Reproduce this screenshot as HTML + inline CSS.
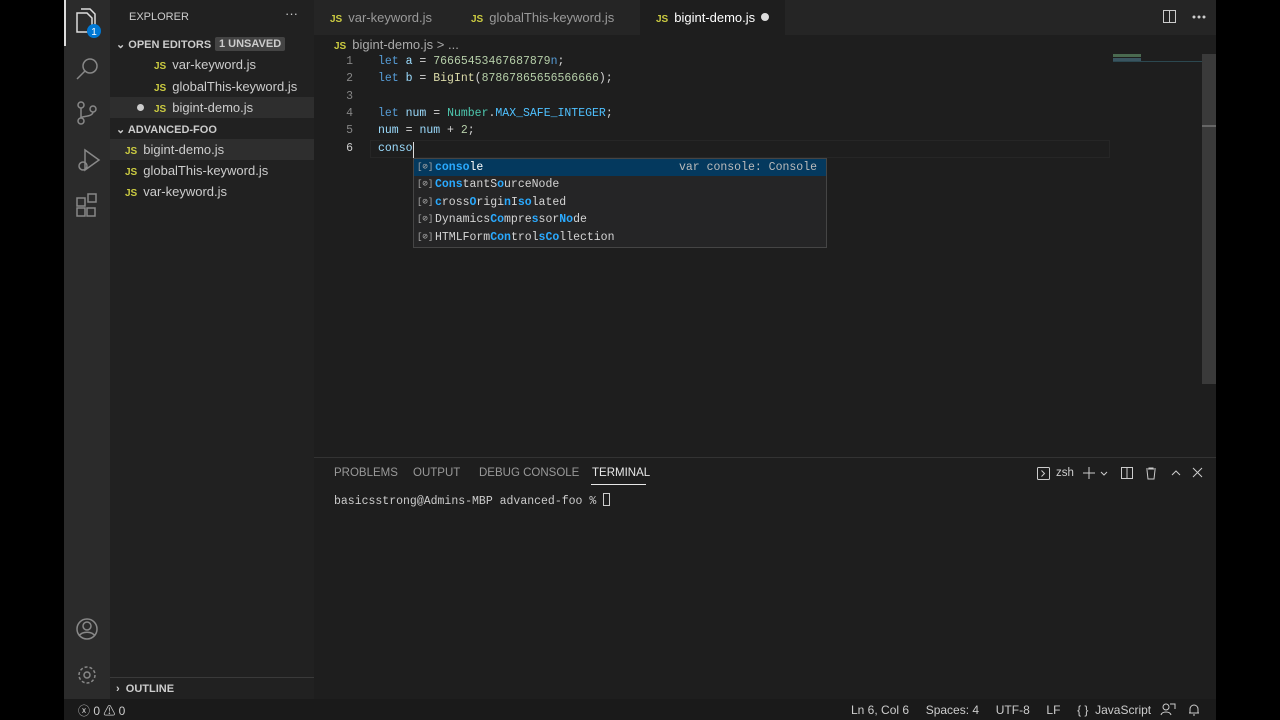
<!DOCTYPE html>
<html><head><meta charset="utf-8"><style>
*{box-sizing:border-box;margin:0;padding:0}
body{width:1280px;height:720px;background:#000;position:relative;overflow:hidden;font-family:"Liberation Sans",sans-serif;font-size:13px;color:#ccc}
.abs{position:absolute}
.act{left:64px;top:0;width:46px;height:699px;background:#2b2b2b}
.side{left:110px;top:0;width:204px;height:699px;background:#212121}
.ed{left:314px;top:0;width:902px;height:457px;background:#1e1e1e}
.tabs{left:314px;top:0;width:902px;height:35px;background:#252525}
.tab{position:absolute;top:0;height:35px;line-height:35px;font-size:13px;color:#9a9a9a;padding-left:16px}
.js{color:#cbcb41;font-weight:bold;font-size:10px;margin-right:6px}
.mono{font-family:"Liberation Mono",monospace;font-size:11.5px}
.ln{position:absolute;left:330px;width:23px;text-align:right;color:#858585}
.code{position:absolute;left:378px;color:#d4d4d4;white-space:pre}
.kw{color:#569cd6}.num{color:#b5cea8}.var{color:#9cdcfe}.cls{color:#4ec9b0}.fn{color:#dcdcaa}.const{color:#4fc1ff}
.sug{left:413px;top:158px;width:414px;height:90px;background:#252526;border:1px solid #454545}
.row{position:absolute;left:0;width:412px;height:17.4px;line-height:17.4px;padding-left:21px;color:#d4d4d4}
.row b{color:#2aaaff;font-weight:bold}
.ic{position:absolute;left:3px;top:0;color:#aaa;font-size:9px}
.panel{left:314px;top:457px;width:902px;height:242px;background:#1e1e1e;border-top:1px solid #333}
.status{left:64px;top:699px;width:1152px;height:21px;background:#1a1a1a;font-size:12px;color:#ccc}
.hdr{font-size:11px;font-weight:bold;color:#ccc}
.file{position:absolute;font-size:13px;color:#ccc;height:21px;line-height:21px}
</style></head><body>
<div class="abs act"></div>
<div class="abs" style="left:64px;top:0;width:2px;height:46px;background:#ddd"></div>
<svg class="abs" style="left:64px;top:0" width="46" height="699" fill="none" stroke="#888" stroke-width="1.5">
<g stroke="#ddd"><path d="M13 13h10l5 5v14H13z"/><path d="M17 9h9l5 5v14"/></g>
<circle cx="30" cy="31" r="7" fill="#0078d4" stroke="none"/><text x="30" y="35" fill="#fff" stroke="none" font-size="10" text-anchor="middle" font-family="Liberation Sans">1</text>
<circle cx="26" cy="66" r="7"/><path d="M21 71l-8 8"/>
<circle cx="17" cy="105" r="3"/><circle cx="17" cy="121" r="3"/><circle cx="29" cy="109" r="3"/><path d="M17 108v10M29 112c0 5-12 4-12 6"/>
<path d="M21 150v20l14-10z"/><circle cx="19" cy="166" r="4"/>
<rect x="13" y="198" width="8" height="8"/><rect x="13" y="208" width="8" height="8"/><rect x="23" y="208" width="8" height="8"/><rect x="24" y="194" width="8" height="8"/>
<circle cx="23" cy="629" r="10"/><circle cx="23" cy="626" r="4"/><path d="M15 636c3-5 13-5 16 0"/>
<circle cx="23" cy="675" r="3"/><circle cx="23" cy="675" r="8" stroke-dasharray="3 2"/>
</svg>
<div class="abs side"></div>
<div class="abs hdr" style="left:129px;top:11px;font-weight:normal">EXPLORER</div>
<div class="abs" style="left:285px;top:6px;color:#ccc">···</div>
<div class="abs hdr" style="left:116px;top:38px">⌄ OPEN EDITORS</div>
<div class="abs hdr" style="left:215px;top:37px;background:#444;padding:1px 4px;border-radius:2px">1 UNSAVED</div>
<div class="file" style="left:154px;top:54px"><span class="js">JS</span>var-keyword.js</div>
<div class="file" style="left:154px;top:76px"><span class="js">JS</span>globalThis-keyword.js</div>
<div class="abs" style="left:110px;top:97px;width:204px;height:21px;background:#2e2e2e"></div>
<div class="abs" style="left:137px;top:104px;width:7px;height:7px;border-radius:50%;background:#ccc"></div>
<div class="file" style="left:154px;top:97px"><span class="js">JS</span>bigint-demo.js</div>
<div class="abs hdr" style="left:116px;top:123px">⌄ ADVANCED-FOO</div>
<div class="abs" style="left:110px;top:139px;width:204px;height:21px;background:#2e2e2e"></div>
<div class="file" style="left:125px;top:139px"><span class="js">JS</span>bigint-demo.js</div>
<div class="file" style="left:125px;top:160px"><span class="js">JS</span>globalThis-keyword.js</div>
<div class="file" style="left:125px;top:181px"><span class="js">JS</span>var-keyword.js</div>
<div class="abs" style="left:110px;top:677px;width:204px;height:1px;background:#3a3a3a"></div>
<div class="abs hdr" style="left:116px;top:683px">›&nbsp; OUTLINE</div>

<div class="abs ed"></div>
<div class="abs tabs"></div>
<div class="tab" style="left:314px;width:138px"><span class="js">JS</span>var-keyword.js</div>
<div class="tab" style="left:455px;width:185px"><span class="js">JS</span>globalThis-keyword.js</div>
<div class="tab" style="left:640px;width:145px;background:#1e1e1e;color:#fff"><span class="js">JS</span>bigint-demo.js</div>
<div class="abs" style="left:761px;top:13px;width:8px;height:8px;border-radius:50%;background:#ddd"></div>
<svg class="abs" style="left:1160px;top:9px" width="50" height="16" fill="none" stroke="#ccc"><rect x="3.5" y="1.5" width="12" height="12"/><path d="M9.5 1.5v12"/><circle cx="34" cy="8" r="1" fill="#ccc"/><circle cx="39" cy="8" r="1" fill="#ccc"/><circle cx="44" cy="8" r="1" fill="#ccc"/></svg>
<div class="abs" style="left:334px;top:37px;font-size:13px;color:#aaa"><span class="js">JS</span>bigint-demo.js &gt; ...</div>
<div class="abs" style="left:1113px;top:54px;width:28px;height:3px;background:#4a6a50"></div>
<div class="abs" style="left:1113px;top:58px;width:28px;height:3px;background:#3a5560"></div>
<div class="abs" style="left:1113px;top:61px;width:89px;height:1px;background:#2c4850"></div>
<div class="abs" style="left:1202px;top:54px;width:14px;height:330px;background:#3a3a3a"></div>
<div class="abs" style="left:1202px;top:125px;width:14px;height:2px;background:#666"></div>
<div class="abs" style="left:370px;top:140px;width:740px;height:18px;border:1px solid #262626"></div>
<div class="mono">
<div class="ln" style="top:55px">1</div><div class="ln" style="top:72px">2</div><div class="ln" style="top:90px">3</div><div class="ln" style="top:107px">4</div><div class="ln" style="top:124px">5</div><div class="ln" style="top:142px;color:#ccc">6</div>
<div class="code" style="top:55px"><span class="kw">let</span> <span class="var">a</span> = <span class="num">76665453467687879</span><span class="kw">n</span>;</div>
<div class="code" style="top:72px"><span class="kw">let</span> <span class="var">b</span> = <span class="fn">BigInt</span>(<span class="num">87867865656566666</span>);</div>
<div class="code" style="top:107px"><span class="kw">let</span> <span class="var">num</span> = <span class="cls">Number</span>.<span class="const">MAX_SAFE_INTEGER</span>;</div>
<div class="code" style="top:124px"><span class="var">num</span> = <span class="var">num</span> + <span class="num">2</span>;</div>
<div class="code" style="top:142px"><span class="var">conso</span></div>
<div class="abs" style="left:413px;top:142px;width:1px;height:16px;background:#ddd"></div>
<div class="abs sug">
<div class="row" style="top:0;background:#04395e;color:#fff"><span class="ic">[⊘]</span><b>conso</b>le<span style="position:absolute;right:9px;color:#bbb">var console: Console</span></div>
<div class="row" style="top:17.4px"><span class="ic">[⊘]</span><b>Cons</b>tantS<b>o</b>urceNode</div>
<div class="row" style="top:34.8px"><span class="ic">[⊘]</span><b>c</b>ross<b>O</b>rigi<b>n</b>I<b>so</b>lated</div>
<div class="row" style="top:52.2px"><span class="ic">[⊘]</span>Dynamics<b>Co</b>mpre<b>s</b>sor<b>No</b>de</div>
<div class="row" style="top:69.6px"><span class="ic">[⊘]</span>HTMLForm<b>Con</b>trol<b>s</b><b>Co</b>llection</div>
</div>
</div>

<div class="abs panel"></div>
<div class="abs" style="left:334px;top:467px;font-size:11.5px;color:#999">PROBLEMS</div>
<div class="abs" style="left:413px;top:467px;font-size:11.5px;color:#999">OUTPUT</div>
<div class="abs" style="left:479px;top:467px;font-size:11.5px;color:#999">DEBUG CONSOLE</div>
<div class="abs" style="left:592px;top:467px;font-size:11.5px;color:#e7e7e7">TERMINAL</div>
<div class="abs" style="left:591px;top:484px;width:55px;height:1px;background:#e7e7e7"></div>
<svg class="abs" style="left:1034px;top:464px" width="175" height="18" fill="none" stroke="#ccc"><rect x="3.5" y="3.5" width="12" height="12" rx="1"/><path d="M7.5 6.5l3 3-3 3"/><path d="M55 3v12M49 9h12M67 8l3 3 3-3"/><rect x="87.5" y="3.5" width="11" height="11"/><path d="M93 3.5v11M112 5h10M115 5v-1h4v1M113 6l1 9h6l1-9"/><path d="M138 11l4-4 4 4M159 4l9 9M168 4l-9 9"/></svg>
<div class="abs" style="left:1056px;top:467px;font-size:11.5px;color:#ccc">zsh</div>
<div class="abs mono" style="left:334px;top:493px;color:#ccc;white-space:pre">basicsstrong@Admins-MBP advanced-foo % <span style="display:inline-block;width:7px;height:13px;border:1px solid #ccc;vertical-align:-2px"></span></div>

<div class="abs status"></div>
<div class="abs" style="left:78px;top:702px;font-size:12px;color:#ccc">ⓧ 0 ⚠ 0</div>
<div class="abs" style="left:851px;top:703px;font-size:12px;color:#ccc;white-space:pre">Ln 6, Col 6     Spaces: 4     UTF-8     LF     { }  JavaScript</div>
<svg class="abs" style="left:1158px;top:701px" width="45" height="17" fill="none" stroke="#ccc"><circle cx="8" cy="6" r="3"/><path d="M3 14c1-4 9-4 10 0M12 3h5v5"/><path d="M32 12V8a4 4 0 018 0v4h1H31zM35 14h2"/></svg>
</body></html>
